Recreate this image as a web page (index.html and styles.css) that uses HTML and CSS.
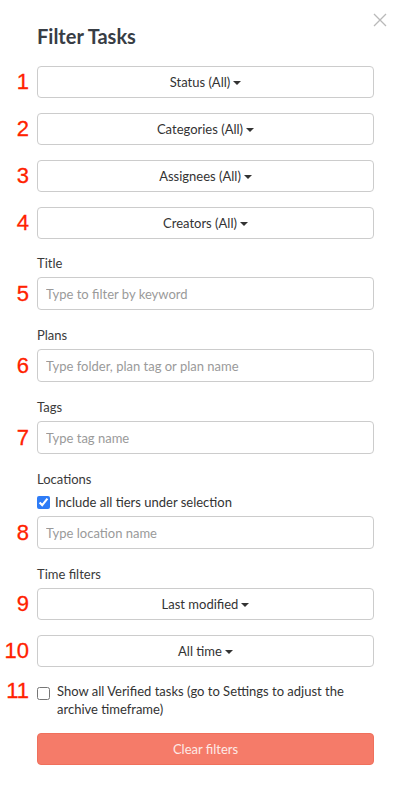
FILE: index.html
```html
<!DOCTYPE html>
<html>
<head>
<meta charset="utf-8">
<link rel="stylesheet" href="styles.css">
</head>
<body>
<div class="panel">
  <button class="close" aria-label="Close">
    <svg width="14" height="14" viewBox="0 0 14 14"><path d="M1 1L13 13M13 1L1 13" stroke="#b9b9b9" stroke-width="1.3" fill="none"/></svg>
  </button>
  <h1 class="title">Filter Tasks</h1>

  <div class="row r-btn"><span class="num">1</span><button class="dd">Status (All)<span class="caret"></span></button></div>
  <div class="row r-btn"><span class="num">2</span><button class="dd">Categories (All)<span class="caret"></span></button></div>
  <div class="row r-btn"><span class="num">3</span><button class="dd">Assignees (All)<span class="caret"></span></button></div>
  <div class="row r-btn"><span class="num">4</span><button class="dd">Creators (All)<span class="caret"></span></button></div>

  <div class="field">
    <div class="row"><span></span><label class="lbl">Title</label></div>
    <div class="row"><span class="num">5</span><input class="inp" placeholder="Type to filter by keyword"></div>
  </div>
  <div class="field">
    <div class="row"><span></span><label class="lbl">Plans</label></div>
    <div class="row"><span class="num">6</span><input class="inp" placeholder="Type folder, plan tag or plan name"></div>
  </div>
  <div class="field">
    <div class="row"><span></span><label class="lbl">Tags</label></div>
    <div class="row"><span class="num">7</span><input class="inp" placeholder="Type tag name"></div>
  </div>
  <div class="field">
    <div class="row"><span></span><label class="lbl">Locations</label></div>
    <div class="row"><span></span><label class="chk"><input type="checkbox" checked><span>Include all tiers under selection</span></label></div>
    <div class="row"><span class="num">8</span><input class="inp" placeholder="Type location name"></div>
  </div>
  <div class="field field-btn">
    <div class="row"><span></span><label class="lbl">Time filters</label></div>
    <div class="row"><span class="num">9</span><button class="dd">Last modified<span class="caret"></span></button></div>
  </div>
  <div class="row r-btn"><span class="num">10</span><button class="dd">All time<span class="caret"></span></button></div>

  <div class="row r-top"><span class="num">11</span><label class="chk chk2"><input type="checkbox"><span>Show all Verified tasks (go to Settings to adjust the archive timeframe)</span></label></div>

  <div class="row"><span></span><button class="clear">Clear filters</button></div>
</div>
</body>
</html>
```

FILE: styles.css
```css
* { box-sizing: border-box; }
html, body { margin: 0; padding: 0; background: #fff; }
body {
  font-family: Lato, "Open Sans", "Liberation Sans", sans-serif;
  font-size: 13px;
  color: #333;
  width: 401px;
  height: 791px;
}
.panel {
  position: relative;
  padding-top: 24px;
  display: flex;
  flex-direction: column;
}
.close {
  position: absolute;
  top: 13px;
  left: 373px;
  border: 0;
  background: none;
  padding: 0;
  width: 14px;
  height: 14px;
  display: block;
}
.close svg { display: block; }
.title {
  margin: 0 0 18px 37px;
  font-size: 20px;
  line-height: 24px;
  font-weight: 700;
  color: #383d45;
}
.row {
  display: grid;
  grid-template-columns: 29px 337px;
  column-gap: 8px;
  align-items: center;
}
.r-btn { margin-bottom: 15px; }
.r-top { align-items: start; margin-bottom: 15px; }
.num {
  font-family: "Liberation Sans", Arial, sans-serif;
  font-size: 22px;
  line-height: 24px;
  color: #ff2200;
  text-align: right;
  -webkit-text-stroke: 0.3px #ff2200;
}
.r-top .num { margin-top: -3px; }
.dd {
  height: 32px;
  border: 1px solid #cccccc;
  border-radius: 4px;
  background: #fff;
  font-family: Lato, sans-serif;
  font-size: 13px;
  color: #333;
  padding: 0 12px;
  display: flex;
  align-items: center;
  justify-content: center;
}
.caret {
  display: inline-block;
  width: 0;
  height: 0;
  margin-left: 3px;
  margin-top: 1px;
  border-top: 4px solid #333;
  border-left: 4px solid transparent;
  border-right: 4px solid transparent;
}
.field {
  display: flex;
  flex-direction: column;
  gap: 5px;
  margin-bottom: 16px;
}
.field-btn { margin-bottom: 15px; }
.lbl {
  font-size: 13px;
  line-height: 18px;
  color: #3a3a3a;
}
.inp {
  height: 33px;
  border: 1px solid #cccccc;
  border-radius: 4px;
  padding: 0 8px;
  font-family: Lato, sans-serif;
  font-size: 13px;
  color: #333;
  outline: none;
}
.inp::placeholder { color: #9a9a9a; }
.chk {
  display: flex;
  align-items: center;
  gap: 5px;
  line-height: 18px;
  font-size: 13px;
  color: #333;
}
.chk input {
  margin: 0;
  width: 13px;
  height: 13px;
  flex: none;
  accent-color: #2f7cf6;
}
.chk2 { align-items: flex-start; gap: 7px; }
.chk2 input { margin-top: 5px; }
.clear {
  height: 32px;
  border: 1px solid #f0705c;
  border-radius: 4px;
  background: #f57b69;
  color: #fdeae6;
  font-family: Lato, sans-serif;
  font-size: 13px;
}
```
